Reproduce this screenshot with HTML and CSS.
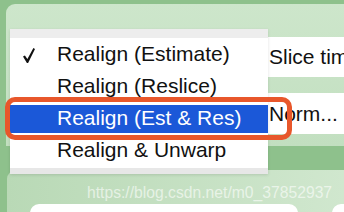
FILE: index.html
```html
<!DOCTYPE html>
<html>
<head>
<meta charset="utf-8">
<link rel="stylesheet" href="styles.css">
</head>
<body>
<div class="screen">
  <div class="panel panel-top">
    <div class="field field-a"><span>Slice timing</span></div>
    <div class="field field-b"><span>Norm...</span></div>
  </div>
  <div class="panel panel-bottom">
    <div class="box box-a"></div>
    <div class="box box-b"></div>
  </div>

  <div class="menu">
    <div class="item">
      <span class="mark"><svg width="12" height="15" viewBox="0 0 12 15"><path d="M0 8.6 L1.9 7.4 L4.4 10.9 L10.4 0 L12 0.9 L5.1 15 L3.9 15 Z" fill="#111"/></svg></span>
      <span class="label">Realign (Estimate)</span>
    </div>
    <div class="item">
      <span class="mark"></span>
      <span class="label">Realign (Reslice)</span>
    </div>
    <div class="item sel">
      <span class="mark"></span>
      <span class="label">Realign (Est &amp; Res)</span>
    </div>
    <div class="item">
      <span class="mark"></span>
      <span class="label">Realign &amp; Unwarp</span>
    </div>
  </div>

  <div class="annot"></div>
  <div class="wm">https://blog.csdn.net/m0_37852937</div>
</div>
</body>
</html>
```
FILE: styles.css
```css
html, body {
  margin: 0;
  padding: 0;
}
body {
  width: 344px;
  height: 212px;
  overflow: hidden;
  background: #8ec18c;
  font-family: "Liberation Sans", Arial, sans-serif;
}
.screen {
  position: relative;
  width: 344px;
  height: 212px;
  overflow: hidden;
  display: flex;
  flex-direction: column;
}
.panel-top {
  margin: 4px 0 0 6px;
  height: 142px;
  flex: none;
  box-sizing: border-box;
  border-radius: 9px 0 0 0;
  background: linear-gradient(#cde6cb, #c2dfc0);
  display: flex;
  flex-direction: column;
  padding-top: 33px;
  gap: 16px;
}
.field {
  margin-left: 256px;
  width: 120px;
  background: #fff;
  display: flex;
  align-items: center;
  padding-left: 7px;
  font-size: 21px;
  color: #111;
  white-space: nowrap;
  overflow: hidden;
}
.field-a { height: 40px; }
.field-b { height: 41px; }
.panel-bottom {
  margin: 24px 0 0 7px;
  flex: 1;
  border-radius: 9px 0 0 0;
  background: linear-gradient(90deg, #b9d9b6, #d0e7ce);
  display: flex;
  align-items: flex-start;
  padding: 34px 0 0 23px;
  gap: 34px;
}
.box {
  background: #fff;
  border-radius: 9px 9px 0 0;
  height: 20px;
  flex: none;
}
.box-a { width: 268px; }
.box-b { width: 50px; }

.menu {
  position: absolute;
  left: 10px;
  top: 29px;
  width: 258px;
  background: #fff;
  border-top: 9px solid #ededed;
  border-bottom: 6px solid #e7e7e7;
  padding-bottom: 2px;
  box-shadow: 0 1px 3px rgba(0, 0, 0, 0.12);
}
.item {
  height: 32px;
  display: flex;
  align-items: center;
  padding-left: 13px;
  font-size: 21px;
  color: #111;
  white-space: nowrap;
}
.mark {
  width: 12px;
  height: 15px;
  margin-right: 22px;
  margin-top: 3px;
  flex: none;
  display: block;
}
.mark svg { display: block; }
.item.sel {
  background: linear-gradient(#1b58d8, #1b58d8) no-repeat 0 3px / 100% 28px;
  color: #fff;
}
.annot {
  position: absolute;
  left: 5px;
  top: 97px;
  width: 287px;
  height: 43px;
  box-sizing: border-box;
  border: 5px solid #e8572b;
  border-radius: 10px;
}
.wm {
  position: absolute;
  left: 87px;
  top: 184px;
  font-size: 15.7px;
  color: rgba(255, 255, 255, 0.6);
  white-space: nowrap;
}
```
